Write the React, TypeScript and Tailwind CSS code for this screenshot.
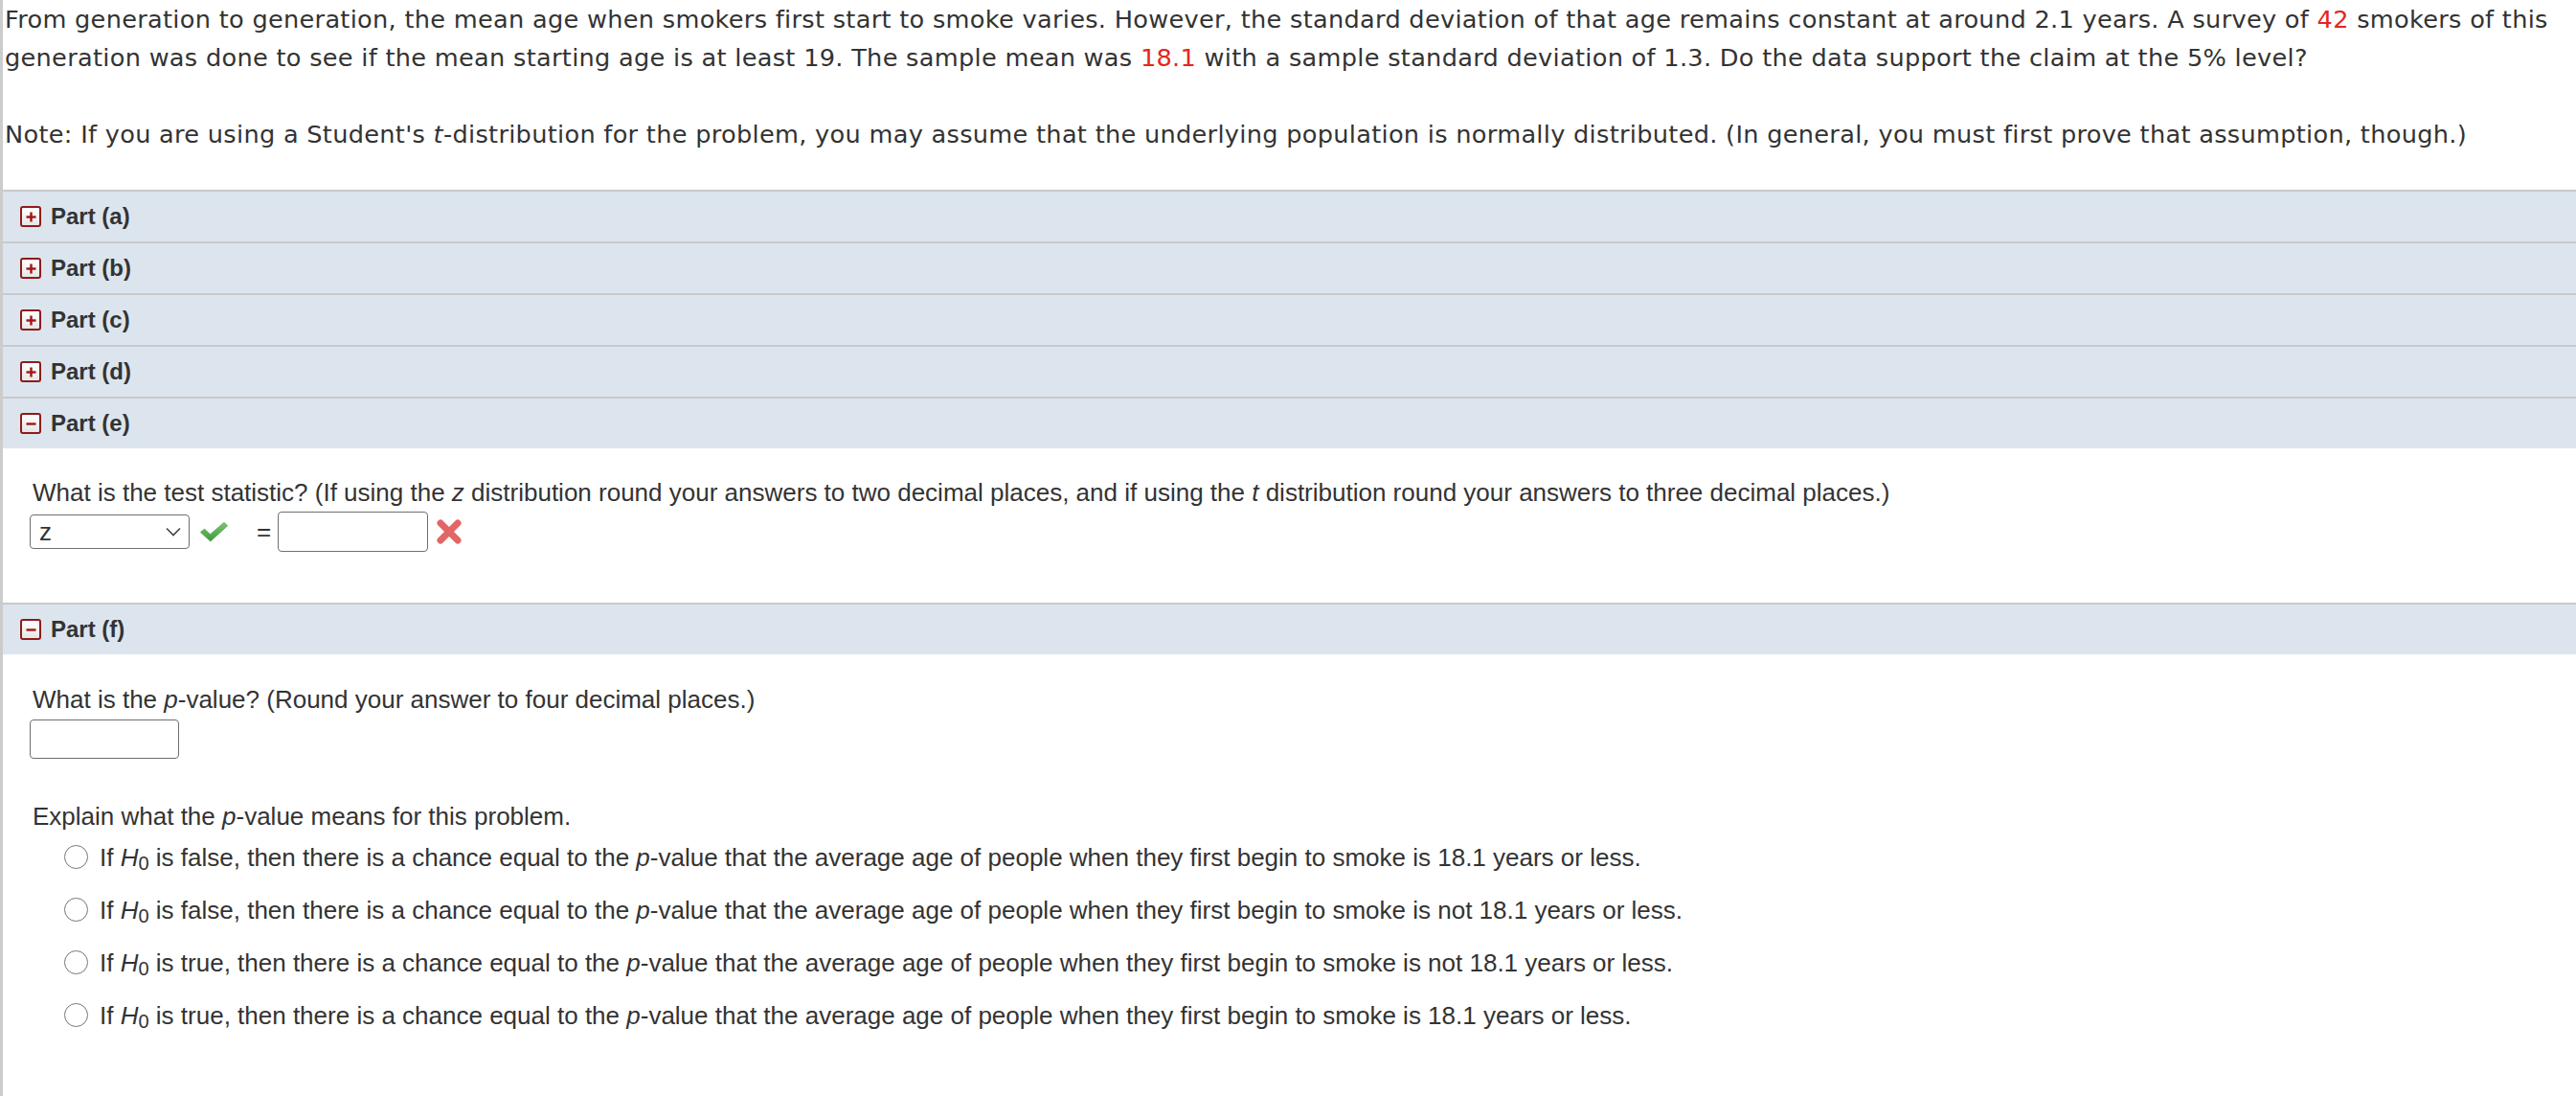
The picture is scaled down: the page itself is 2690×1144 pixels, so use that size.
import React from "react"

// -------------------------------------------------------------------
// Small drawings
// -------------------------------------------------------------------

function ToggleBox({ open }: { open: boolean }) {
  return (
    <span className="flex h-[22px] w-[22px] shrink-0 items-center justify-center rounded-[3px] border-2 border-[#8e1b1b] bg-gradient-to-b from-white to-[#e6e6e6]">
      <svg width="11" height="11" viewBox="0 0 11 11">
        <rect x="0.5" y="4.3" width="10" height="2.4" fill="#a31515" />
        {!open && <rect x="4.3" y="0.5" width="2.4" height="10" fill="#a31515" />}
      </svg>
    </span>
  )
}

function Check() {
  return (
    <svg width="31" height="22" viewBox="0 0 31 22" className="shrink-0">
      <defs>
        <linearGradient id="ck" x1="0" y1="0" x2="0" y2="1">
          <stop offset="0" stopColor="#7bc86f" />
          <stop offset="1" stopColor="#3e9a3e" />
        </linearGradient>
      </defs>
      <path
        d="M1.5 11.5 L5.5 8.2 L11.5 13.8 L26 1.5 L29.5 4.8 L11.8 21 Z"
        fill="url(#ck)"
        stroke="#4a9a44"
        strokeWidth="0.8"
        strokeLinejoin="round"
      />
    </svg>
  )
}

function Cross() {
  return (
    <svg width="28" height="28" viewBox="0 0 28 28" className="shrink-0">
      <g stroke="#e05555" strokeWidth="7" strokeLinecap="round" opacity="0.9">
        <line x1="5" y1="5" x2="23" y2="23" />
        <line x1="23" y1="5" x2="5" y2="23" />
      </g>
    </svg>
  )
}

function Chevron() {
  return (
    <svg width="16" height="10" viewBox="0 0 16 10">
      <path d="M1 1.5 L8 8.5 L15 1.5" fill="none" stroke="#444" strokeWidth="1.6" />
    </svg>
  )
}

// -------------------------------------------------------------------
// Pieces
// -------------------------------------------------------------------

function PartHeader({ label, open }: { label: string; open: boolean }) {
  return (
    <div className="flex h-[54px] items-center gap-[10px] border-t-2 border-[#c9c9c9] bg-[#dce5ee] pl-[18px]">
      <ToggleBox open={open} />
      <span className="text-[24px] font-bold text-[#333333]">{label}</span>
    </div>
  )
}

function H0() {
  return (
    <>
      <i>H</i>
      <sub className="relative top-[4px] align-baseline text-[20px]">0</sub>
    </>
  )
}

const OPTIONS = [
  ["false", "18.1 years or less."],
  ["false", "not 18.1 years or less."],
  ["true", "not 18.1 years or less."],
  ["true", "18.1 years or less."],
]

// -------------------------------------------------------------------
// Page
// -------------------------------------------------------------------

export default function App() {
  return (
    <div className="min-h-[1144px] w-[2690px] border-l-[3px] border-[#cccccc] bg-white font-['Liberation_Sans',Arial,sans-serif] text-[#333333]">
      {/* Problem statement */}
      <div className="whitespace-nowrap pl-[2px] pb-[38px] font-['DejaVu_Sans',sans-serif] text-[25.6px] leading-[40px] tracking-[0.3px]">
        From generation to generation, the mean age when smokers first start to smoke varies. However, the
        standard deviation of that age remains constant at around 2.1 years. A survey of{" "}
        <span className="text-[#e3261d]">42</span> smokers of this
        <br />
        generation was done to see if the mean starting age is at least 19. The sample mean was{" "}
        <span className="text-[#e3261d]">18.1</span> with a sample standard deviation of 1.3. Do the data
        support the claim at the 5% level?
        <br />
        <br />
        Note: If you are using a Student's <i>t</i>-distribution for the problem, you may assume that the
        underlying population is normally distributed. (In general, you must first prove that assumption,
        though.)
      </div>

      <PartHeader label="Part (a)" open={false} />
      <PartHeader label="Part (b)" open={false} />
      <PartHeader label="Part (c)" open={false} />
      <PartHeader label="Part (d)" open={false} />
      <PartHeader label="Part (e)" open={true} />

      <div className="pl-[28px] pt-[31px] pb-[53px] text-[26px] leading-[30px]">
        <p className="pl-[3px]">
          What is the test statistic? (If using the <i>z</i> distribution round your answers to two decimal
          places, and if using the <i>t</i> distribution round your answers to three decimal places.)
        </p>
        <div className="mt-[5px] flex h-[42px] items-center">
          <div className="flex h-[36px] w-[167px] items-center justify-between rounded-[4px] border-[1.5px] border-[#6f6f6f] pl-[9px] pr-[8px]">
            <span>z</span>
            <Chevron />
          </div>
          <span className="ml-[10px]">
            <Check />
          </span>
          <span className="ml-[29px]">=</span>
          <div className="ml-[7px] h-[42px] w-[157px] rounded-[4px] border-[1.5px] border-[#6f6f6f]" />
          <span className="ml-[8px]">
            <Cross />
          </span>
        </div>
      </div>

      <PartHeader label="Part (f)" open={true} />

      <div className="pl-[28px] pt-[32px] text-[26px] leading-[30px]">
        <p className="pl-[3px]">
          What is the <i>p</i>-value? (Round your answer to four decimal places.)
        </p>
        <div className="mt-[6px] h-[41px] w-[156px] rounded-[4px] border-[1.5px] border-[#6f6f6f]" />
        <p className="mt-[45px] pl-[3px]">
          Explain what the <i>p</i>-value means for this problem.
        </p>
        {OPTIONS.map(([truth, tail], i) => (
          <div key={i} className="flex h-[55px] items-center pl-[36px]">
            <span className="h-[25px] w-[25px] shrink-0 rounded-full border-[1.5px] border-[#767676] bg-white" />
            <span className="ml-[12px]">
              If <H0 /> is {truth}, then there is a chance equal to the <i>p</i>-value that the average age of
              people when they first begin to smoke is {tail}
            </span>
          </div>
        ))}
      </div>
    </div>
  )
}
